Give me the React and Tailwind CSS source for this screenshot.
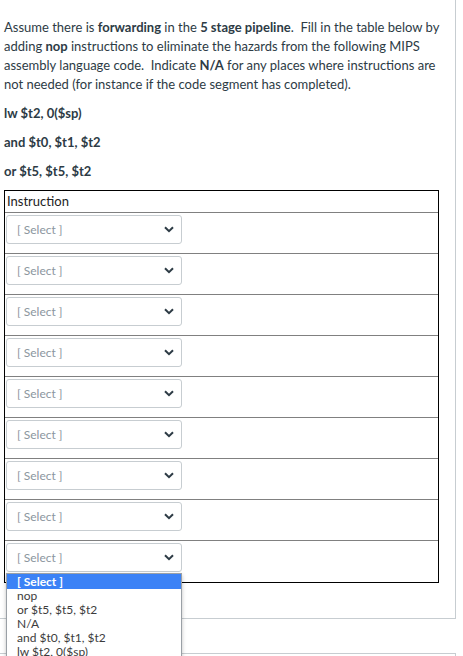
import React from 'react';

const rows = 9;
const options = ['nop', 'or $t5, $t5, $t2', 'N/A', 'and $t0, $t1, $t2', 'lw $t2, 0($sp)'];

const Chevron = () => (
  <svg width="10" height="7" viewBox="0 0 10 7" className="text-[#2d3b45]">
    <path d="M1 1.2 L5 5.2 L9 1.2" fill="none" stroke="currentColor" strokeWidth="2" />
  </svg>
);

const SelectBox = ({ open }) => (
  <div className="relative">
    <div className="flex h-[29px] w-[176px] items-center justify-between rounded-[3px] border border-[#c7cdd1] bg-white pl-[10px] pr-[7px] text-[12px] text-[#8b969e]">
      <span>[ Select ]</span>
      <Chevron />
    </div>
    {open && (
      <div className="absolute left-0 top-[30px] z-10 w-[176px] border border-[#9aa0a6] bg-white text-[12px] leading-[14px] text-[#3c3c3c] shadow-[0_2px_4px_rgba(0,0,0,0.25)]">
        <div className="bg-[#3b82f6] px-[10px] py-[0.5px] font-bold text-white">[ Select ]</div>
        {options.map((o) => (
          <div key={o} className="px-[10px]">{o}</div>
        ))}
      </div>
    )}
  </div>
);

export default function App() {
  return (
    <div className="h-[656px] overflow-hidden bg-white font-['Lato','Liberation_Sans',sans-serif] text-[#2d3b45]">
      <div className="w-[456px] border-b border-r border-[#c7cdd1] pb-[35px] pl-[4px] pt-[18px]">
        <p className="text-[13px] leading-[19px]">
          Assume there is <b>forwarding</b> in the <b>5 stage pipeline</b>.&nbsp; Fill in the table below by adding{' '}
          <b>nop</b> instructions to eliminate the hazards from the following MIPS assembly language code.&nbsp; Indicate{' '}
          <b>N/A</b> for any places where instructions are not needed (for instance if the code segment has completed).
        </p>
        <div className="mt-[10px] flex flex-col gap-[10px] text-[13px] font-bold leading-[19px]">
          <p>lw $t2, 0($sp)</p>
          <p>and $t0, $t1, $t2</p>
          <p>or $t5, $t5, $t2</p>
        </div>
        <div className="mt-[9px] w-[435px] border border-black">
          <div className="h-[22px] border-b border-[#808080] pl-[2px] text-[13px] leading-[20px] text-[#222]">Instruction</div>
          {Array.from({ length: rows }).map((_, i) => (
            <div
              key={i}
              className={`h-[41px] pl-[1px] pt-[2px] ${i < rows - 1 ? 'border-b border-[#808080]' : ''}`}
            >
              <SelectBox open={i === rows - 1} />
            </div>
          ))}
        </div>
      </div>
      <div className="mt-[34px] h-[10px] w-[456px] border-r border-t border-[#c7cdd1]" />
    </div>
  );
}
